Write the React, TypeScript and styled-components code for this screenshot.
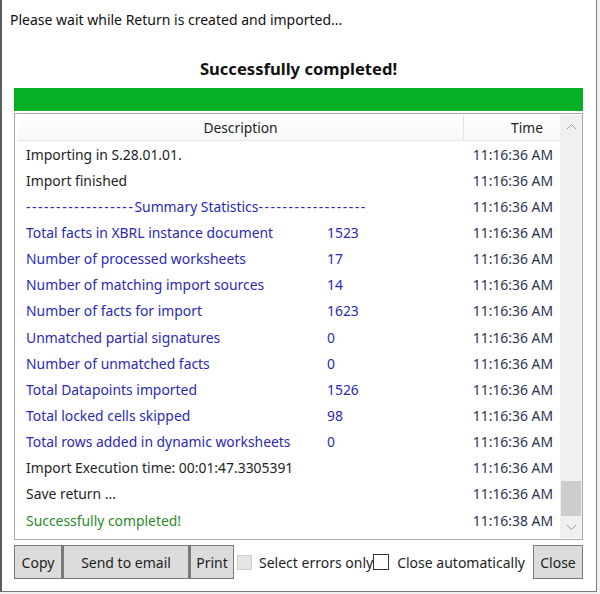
import { createGlobalStyle } from "styled-components";
import styled from "styled-components";

const GlobalStyle = createGlobalStyle`
  html, body {
    margin: 0;
    padding: 0;
    background: #f0f0f0;
  }
  body {
    font-family: "Noto Sans", "Open Sans", sans-serif;
    color: #1e1e1e;
  }
`;

type Tone = "plain" | "info" | "success";

interface LogRow {
  text: string;
  value?: string;
  time: string;
  tone: Tone;
  divider?: boolean;
}

const rows: LogRow[] = [
  { text: "Importing in S.28.01.01.", time: "11:16:36 AM", tone: "plain" },
  { text: "Import finished", time: "11:16:36 AM", tone: "plain" },
  { text: "Summary Statistics", time: "11:16:36 AM", tone: "info", divider: true },
  { text: "Total facts in XBRL instance document", value: "1523", time: "11:16:36 AM", tone: "info" },
  { text: "Number of processed worksheets", value: "17", time: "11:16:36 AM", tone: "info" },
  { text: "Number of matching import sources", value: "14", time: "11:16:36 AM", tone: "info" },
  { text: "Number of facts for import", value: "1623", time: "11:16:36 AM", tone: "info" },
  { text: "Unmatched partial signatures", value: "0", time: "11:16:36 AM", tone: "info" },
  { text: "Number of unmatched facts", value: "0", time: "11:16:36 AM", tone: "info" },
  { text: "Total Datapoints imported", value: "1526", time: "11:16:36 AM", tone: "info" },
  { text: "Total locked cells skipped", value: "98", time: "11:16:36 AM", tone: "info" },
  { text: "Total rows added in dynamic worksheets", value: "0", time: "11:16:36 AM", tone: "info" },
  { text: "Import Execution time: 00:01:47.3305391", time: "11:16:36 AM", tone: "plain" },
  { text: "Save return ...", time: "11:16:36 AM", tone: "plain" },
  { text: "Successfully completed!", time: "11:16:38 AM", tone: "success" },
];

const toneColor: Record<Tone, string> = {
  plain: "#1e1e1e",
  info: "#2a2ab4",
  success: "#2c8a2c",
};

const dashes = "------------------";

export default function App() {
  return (
    <>
      <GlobalStyle />
      <Window>
        <Message>Please wait while Return is created and imported...</Message>
        <Status>Successfully completed!</Status>
        <Progress>
          <ProgressFill style={{ width: "100%" }} />
        </Progress>
        <ListBox>
          <ListContent>
            <Header>
              <DescHeader>Description</DescHeader>
              <TimeHeader>Time</TimeHeader>
            </Header>
            {rows.map((row, i) => (
              <Row key={i} $tone={row.tone}>
                <DescCell>
                  {row.divider ? (
                    <span>
                      <Dashes>{dashes}</Dashes>
                      {row.text}
                      <Dashes>{dashes}</Dashes>
                    </span>
                  ) : (
                    <>
                      <Label>{row.text}</Label>
                      {row.value && <span>{row.value}</span>}
                    </>
                  )}
                </DescCell>
                <TimeCell>{row.time}</TimeCell>
              </Row>
            ))}
          </ListContent>
          <ScrollBar>
            <Arrow>
              <svg width="11" height="7" viewBox="0 0 11 7">
                <path d="M1 6 L5.5 1.5 L10 6" fill="none" stroke="#a0a0a0" strokeWidth="1" />
              </svg>
            </Arrow>
            <Track>
              <Thumb />
            </Track>
            <Arrow>
              <svg width="11" height="7" viewBox="0 0 11 7">
                <path d="M1 1 L5.5 5.5 L10 1" fill="none" stroke="#a0a0a0" strokeWidth="1" />
              </svg>
            </Arrow>
          </ScrollBar>
        </ListBox>
        <Footer>
          <ButtonGroup>
            <Button $width={48}>Copy</Button>
            <Button $width={127}>Send to email</Button>
            <Button $width={45}>Print</Button>
          </ButtonGroup>
          <CheckOption $disabled>
            <Box $disabled />
            <span>Select errors only</span>
          </CheckOption>
          <CheckOption>
            <Box />
            <span>Close automatically</span>
          </CheckOption>
          <Spacer />
          <Button $width={50}>Close</Button>
        </Footer>
      </Window>
    </>
  );
}

const Window = styled.div`
  box-sizing: border-box;
  width: 597px;
  height: 592px;
  background: #ffffff;
  border-left: 2px solid #5c5c5c;
  border-right: 1px solid #7a7a7a;
  border-bottom: 1px solid #7a7a7a;
  padding: 10px 13px 0 12px;
  display: flex;
  flex-direction: column;
`;

const Message = styled.div`
  font-size: 14px;
  line-height: 20px;
  margin-left: -4px;
  color: #111;
`;

const Status = styled.div`
  margin-top: 28px;
  text-align: center;
  font-size: 16.6px;
  font-weight: 700;
  line-height: 22px;
  color: #111;
`;

const Progress = styled.div`
  margin-top: 8px;
  height: 23px;
  background: #e6e6e6;
`;

const ProgressFill = styled.div`
  height: 100%;
  background: #06b025;
`;

const ListBox = styled.div`
  margin-top: 2px;
  height: 427px;
  box-sizing: border-box;
  border: 1px solid #a8a8a8;
  display: flex;
  padding: 1px 1px 1px 3px;
`;

const ListContent = styled.div`
  flex: 1;
  display: flex;
  flex-direction: column;
  overflow: hidden;
`;

const Header = styled.div`
  display: flex;
  height: 25px;
  flex-shrink: 0;
  background: linear-gradient(#ffffff, #f7f8f9);
  border-bottom: 1px solid #e3e5e8;
  font-size: 13.8px;
  color: #1e1e1e;
`;

const DescHeader = styled.div`
  width: 445px;
  display: flex;
  align-items: center;
  justify-content: center;
  border-right: 1px solid #e3e5e8;
`;

const TimeHeader = styled.div`
  flex: 1;
  display: flex;
  align-items: center;
  justify-content: flex-end;
  padding-right: 17px;
`;

const Row = styled.div<{ $tone: Tone }>`
  display: flex;
  align-items: center;
  height: 26.15px;
  flex-shrink: 0;
  font-size: 13.9px;
  color: ${(p) => toneColor[p.$tone]};
  white-space: nowrap;
`;

const DescCell = styled.div`
  width: 446px;
  box-sizing: border-box;
  padding-left: 8px;
  display: flex;
`;

const Label = styled.span`
  width: 301px;
  flex-shrink: 0;
`;

const Dashes = styled.span`
  letter-spacing: 1.55px;
`;

const TimeCell = styled.div`
  flex: 1;
  text-align: right;
  padding-right: 7px;
  color: #2b3550;
`;

const ScrollBar = styled.div`
  width: 22px;
  background: #f0f0f0;
  display: flex;
  flex-direction: column;
  margin-right: -1px;
`;

const Arrow = styled.div`
  height: 22px;
  display: flex;
  align-items: center;
  justify-content: center;
`;

const Track = styled.div`
  flex: 1;
  display: flex;
  flex-direction: column;
  justify-content: flex-end;
  padding: 0 1px;
`;

const Thumb = styled.div`
  height: 35px;
  background: #cdcdcd;
`;

const Footer = styled.div`
  margin-top: 5px;
  display: flex;
  align-items: center;
  height: 34px;
  font-size: 14px;
`;

const ButtonGroup = styled.div`
  display: flex;
  height: 100%;
`;

const Button = styled.button<{ $width: number }>`
  width: ${(p) => p.$width}px;
  height: 34px;
  box-sizing: border-box;
  padding: 0;
  background: #dcdcdc;
  border: 1px solid #7a7a7a;
  font-family: inherit;
  font-size: 14px;
  color: #1e1e1e;
  & + & {
    border-left-width: 2px;
  }
`;

const CheckOption = styled.label<{ $disabled?: boolean }>`
  display: flex;
  align-items: center;
  gap: ${(p) => (p.$disabled ? "7px" : "8px")};
  margin-left: ${(p) => (p.$disabled ? "3px" : "0px")};
  color: #1e1e1e;
`;

const Box = styled.span<{ $disabled?: boolean }>`
  width: ${(p) => (p.$disabled ? "15px" : "16px")};
  height: ${(p) => (p.$disabled ? "15px" : "16px")};
  box-sizing: border-box;
  background: ${(p) => (p.$disabled ? "#e6e6e6" : "#ffffff")};
  border: 1px solid ${(p) => (p.$disabled ? "#cccccc" : "#333333")};
`;

const Spacer = styled.div`
  flex: 1;
`;
